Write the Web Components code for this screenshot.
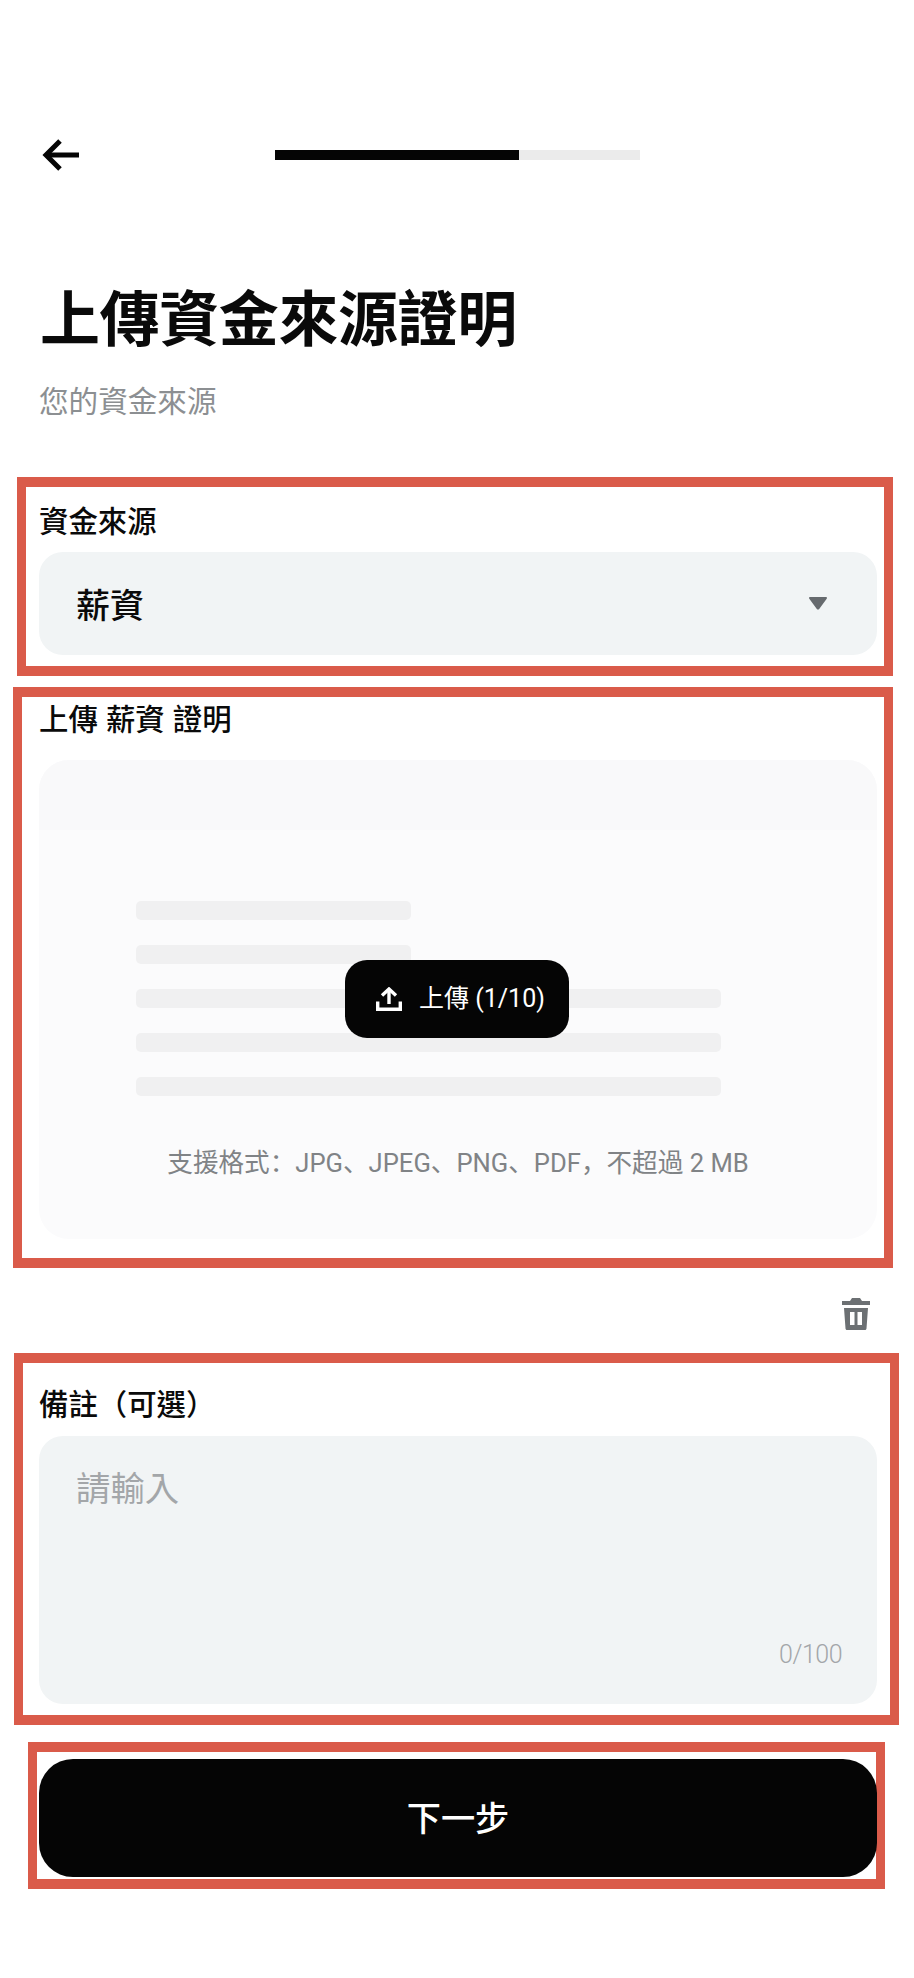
<!DOCTYPE html>
<html>
<head>
<meta charset="utf-8">
<title>上傳資金來源證明</title>
<style>
html,body{margin:0;padding:0;background:#fff}
body{font-family:Roboto,"Noto Sans CJK TC",sans-serif;color:#0a0a0a}
</style>
</head>
<body>
<app-screen>
  <top-bar></top-bar>
  <page-heading title-text="上傳資金來源證明" sub-text="您的資金來源"></page-heading>
  <red-box style="--l:17px;--r:21px;--h:199px;--t:0px;--pt:14px">
    <field-label>資金來源</field-label>
    <select-field>薪資</select-field>
  </red-box>
  <red-box style="--l:13px;--r:21px;--h:581px;--t:11px;--pt:2px">
    <field-label>上傳 薪資 證明</field-label>
    <upload-card>
      <span slot="action">上傳 (1/10)</span>
      支援格式：JPG、JPEG、PNG、PDF，不超過 2 MB
    </upload-card>
  </red-box>
  <trash-row></trash-row>
  <red-box style="--l:14px;--r:15px;--h:372px;--t:0px;--pt:21px">
    <field-label>備註（可選）</field-label>
    <note-field placeholder="請輸入" counter="0/100"></note-field>
  </red-box>
  <red-box style="--l:28px;--r:29px;--h:147px;--t:17px;--pt:7px">
    <next-button>下一步</next-button>
  </red-box>
</app-screen>
<script>
const def=(name,html)=>customElements.define(name,class extends HTMLElement{
  constructor(){super();const s=this.attachShadow({mode:'open'});s.innerHTML=html;}
  connectedCallback(){
    this.shadowRoot.querySelectorAll('[data-attr]').forEach(e=>{e.textContent=this.getAttribute(e.dataset.attr)||''});
  }
});
def('app-screen',`<style>:host{display:block;width:914px;height:1978px;overflow:hidden;background:#fff;box-sizing:border-box;padding-top:138px}</style><slot></slot>`);
def('top-bar',`<style>
:host{display:grid;grid-template-columns:1fr 365px 1fr;align-items:center;height:34px}
svg{display:block;margin-left:41px}
.track{height:10px;background:#ebebeb;display:flex}
.fill{width:244px;background:#050505}
</style>
<svg width="40" height="34" viewBox="0 0 40 34" fill="none" stroke="#050505" stroke-width="5" stroke-linejoin="miter"><path d="M38 17H6"/><path d="M19 3 5 17l14 14"/></svg>
<div class="track"><div class="fill"></div></div><span></span>`);
def('page-heading',`<style>
:host{display:block;padding:105px 0 0 40px;height:305px;box-sizing:border-box}
h1{margin:0;font:700 60px/76px "Noto Sans CJK TC",sans-serif;color:#0a0a0a;letter-spacing:-.4px}
p{margin:26px 0 0 -1px;font:400 29.6px/42px "Noto Sans CJK TC",sans-serif;color:#8c8f92}
</style><h1 data-attr="title-text"></h1><p data-attr="sub-text"></p>`);
def('red-box',`<style>
:host{display:block;box-sizing:border-box;margin:var(--t) var(--r) 0 var(--l);height:var(--h);border-style:solid;border-color:#da5b4a;border-width:10px 9px;padding-top:var(--pt);padding-left:calc(30px - var(--l));padding-right:max(0px,calc(28px - var(--r)))}
</style><slot></slot>`);
def('field-label',`<style>
:host{display:block;font:500 29.4px/36px "Noto Sans CJK TC",sans-serif;color:#0a0a0a;word-spacing:1.500px}
</style><slot></slot>`);
def('select-field',`<style>
:host{display:flex;align-items:center;justify-content:space-between;box-sizing:border-box;height:103px;margin-top:15px;background:#f1f4f5;border-radius:24px;padding:0 50px 0 37px;font:500 34px/40px "Noto Sans CJK TC",sans-serif;color:#0a0a0a}
svg{display:block}
</style><slot></slot><svg width="18" height="13" viewBox="0 0 18 13"><path d="M1 0h16c1 0 1.300 1 .7 1.800L10.200 12c-.6.800-1.800.800-2.400 0L.3 1.800C-.3 1 0 0 1 0z" fill="#666a6e"/></svg>`);
def('upload-card',`<style>
:host{display:block;position:relative;box-sizing:border-box;height:479px;margin-top:24.500px;background:#fbfbfc;border-radius:30px;overflow:hidden}
.band{height:70px;background:#f9f9fa}
.lines{display:flex;flex-direction:column;gap:24.500px;padding:71px 0 0 97px}
.lines i{display:block;height:19.500px;width:585px;background:#f0f0f1;border-radius:5px}
.lines i.s{width:275px}
.help{margin-top:49px;text-align:center;font:400 25.600px/36px Roboto,"Noto Sans CJK SC",sans-serif;color:#808386}
.action{position:absolute;left:306px;top:200.500px;width:224px;height:78px;box-sizing:border-box;background:#050505;border-radius:22px;color:#fff;display:flex;align-items:center;gap:17px;padding-left:31px;font:400 25px/32px Roboto,"Noto Sans CJK TC",sans-serif}
svg{display:block;flex:none}
</style>
<div class="band"></div>
<div class="lines"><i class="s"></i><i class="s"></i><i></i><i></i><i></i></div>
<div class="help"><slot></slot></div>
<div class="action"><svg width="26" height="24" viewBox="0 0 26 24" fill="none" stroke="#fff" stroke-width="3.400"><path d="M13 2v15"/><path d="M6 8.500 13 2l7 6.500"/><path d="M1.700 14.500v7.800h22.600v-7.800"/></svg><slot name="action"></slot></div>`);
def('trash-row',`<style>
:host{display:flex;justify-content:flex-end;height:85px;padding:30px 44px 0 0;box-sizing:border-box}
svg{display:block}
</style>
<svg width="28" height="32" viewBox="0 0 28 32"><path d="M10 0h8l2 3h8v4H0V3h8z" fill="#6c7073"/><path d="M2 10h24l-1.500 20.500c0 .8-.7 1.500-1.500 1.500H5c-.8 0-1.500-.7-1.500-1.500z" fill="#6c7073"/><rect x="8" y="14" width="4.500" height="13" fill="#fff"/><rect x="15.500" y="14" width="4.500" height="13" fill="#fff"/></svg>`);
def('note-field',`<style>
:host{display:block;position:relative;box-sizing:border-box;height:268px;margin-top:16px;background:#f1f4f5;border-radius:24px;padding:28px 37px 0}
.ph{font:400 34.400px/44px "Noto Sans CJK TC",sans-serif;color:#a3a6a9}
.c{position:absolute;right:35px;bottom:33px;font:300 25px/32px Roboto,sans-serif;letter-spacing:-.5px;color:#a3a6a9}
</style><div class="ph" data-attr="placeholder"></div><div class="c" data-attr="counter"></div>`);
def('next-button',`<style>
:host{display:flex;align-items:center;justify-content:center;box-sizing:border-box;width:838px;height:118px;padding-bottom:4px;background:#050505;border-radius:34px;color:#fff;font:500 34.200px/44px "Noto Sans CJK TC",sans-serif}
</style><slot></slot>`);
</script>
</body>
</html>
